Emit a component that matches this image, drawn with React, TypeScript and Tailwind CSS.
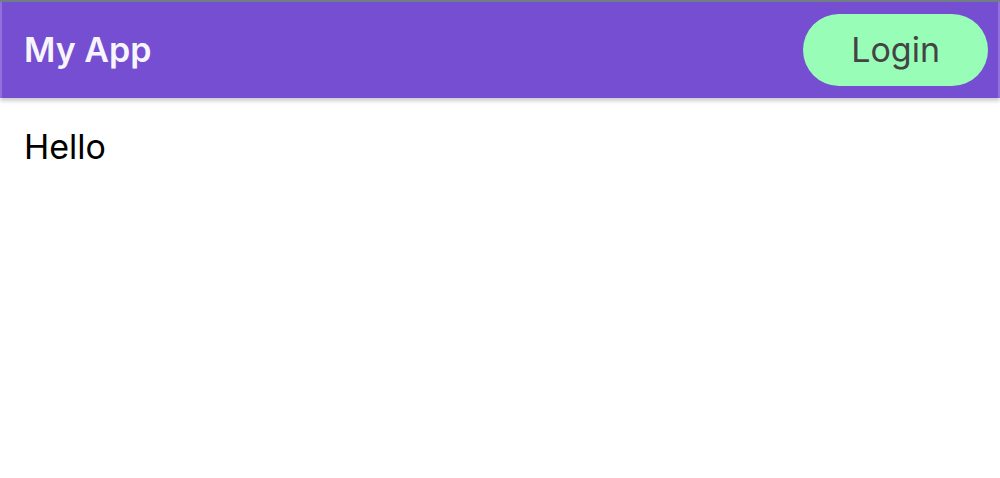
function Header() {
  return (
    <header className="flex items-center justify-between border-x-2 border-[#916fdc] bg-[#764ed1] py-3 pr-2.5 pl-[22px] shadow-[0_3px_4px_rgba(0,0,0,0.2)]">
      <h1 className="text-[34px] leading-[42px] font-semibold text-[#f7f5fc]">My App</h1>
      <button
        type="button"
        className="h-[72px] rounded-full bg-[#98fdb7] px-12 text-[34px] leading-[42px] text-[#444444]"
      >
        Login
      </button>
    </header>
  );
}

export default function App() {
  return (
    <div className="min-h-screen border-t-2 border-[#717e86] bg-white font-['Inter',sans-serif] text-black">
      <Header />
      <main className="px-6 py-7">
        <p className="text-[34px] leading-[42px]">Hello</p>
      </main>
    </div>
  );
}
